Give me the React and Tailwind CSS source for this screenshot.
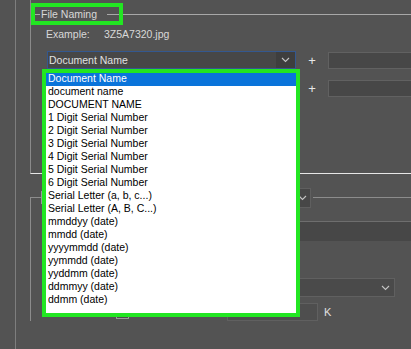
import React from "react";

const items = [
  "Document Name",
  "document name",
  "DOCUMENT NAME",
  "1 Digit Serial Number",
  "2 Digit Serial Number",
  "3 Digit Serial Number",
  "4 Digit Serial Number",
  "5 Digit Serial Number",
  "6 Digit Serial Number",
  "Serial Letter (a, b, c...)",
  "Serial Letter (A, B, C...)",
  "mmddyy (date)",
  "mmdd (date)",
  "yyyymmdd (date)",
  "yymmdd (date)",
  "yyddmm (date)",
  "ddmmyy (date)",
  "ddmm (date)",
];

function Chevron({ className = "" }) {
  return (
    <svg width="9" height="6" viewBox="0 0 9 6" className={className}>
      <polyline points="1,1 4.5,4.5 8,1" fill="none" stroke="#c4c4c4" strokeWidth="1.1" />
    </svg>
  );
}

export default function App() {
  return (
    <div className="relative w-[411px] h-[349px] overflow-hidden bg-[#535353] font-['Liberation_Sans',Arial,sans-serif] text-[10.5px] text-[#d8d8d8]">
      <div className="ml-[15px] h-full border-l border-[#7e7e7e] pl-[14px]">
        {/* Group 1: File Naming */}
        <div className="h-[174px] w-[420px] border-l border-b border-l-[#8a8a8a] border-b-[#e6e6e6]">
          <div className="flex h-[29px] items-center">
            <div className="h-px w-[9px] bg-[#a8a8a8]" />
            <span className="pl-[1px] pr-[10px] leading-none">File Naming</span>
            <div className="h-px flex-1 bg-[#a8a8a8]" />
          </div>
          <div className="flex h-[11px] items-center pl-[15px] leading-none">
            <span className="w-[58px]">Example:</span>
            <span>3Z5A7320.jpg</span>
          </div>
          <div className="mt-[11px] flex h-[18px] items-center pl-[16px]">
            <div className="flex h-[18px] w-[249px] items-stretch border border-[#34588f] bg-[#474747]">
              <span className="flex-1 pl-[1px] leading-[16px] text-[#e0e0e0]">Document Name</span>
              <span className="flex w-[19px] items-center justify-center bg-[#3e3e3e]">
                <Chevron />
              </span>
            </div>
            <span className="w-[32px] text-center text-[13px] leading-none text-[#e8e8e8]">+</span>
            <div className="h-[17px] flex-1 border border-[#616161] bg-[#474747]" />
          </div>
          <div className="mt-[11px] flex h-[17px] items-center pl-[16px]">
            <div className="flex h-[17px] w-[249px] items-stretch border border-[#616161] bg-[#474747]">
              <span className="flex-1" />
              <span className="flex w-[19px] items-center justify-center">
                <Chevron />
              </span>
            </div>
            <span className="w-[32px] text-center text-[13px] leading-none text-[#e8e8e8]">+</span>
            <div className="h-[17px] flex-1 border border-[#616161] bg-[#474747]" />
          </div>
        </div>

        {/* Group 2 */}
        <fieldset className="mt-[13px] w-[420px] border-l border-t border-[#8c8c8c]">
          <legend className="ml-[10px] flex h-[21px] w-[272px] items-center pr-[2px]">
            <span className="h-[13px] w-[13px] border border-[#9a9a9a] bg-[#474747]" />
            <span className="flex-1" />
            <div className="flex h-[20px] w-[60px] items-stretch border border-[#5f5f5f] bg-[#474747]">
              <span className="flex-1" />
              <span className="flex w-[15px] items-center justify-center">
                <Chevron />
              </span>
            </div>
          </legend>
          <div className="ml-[30px] mt-[13px] h-[20px] border-t border-[#6e6e6e] bg-[#474747]" />
          <div className="ml-[169px] mt-[37px] flex h-[19px] w-[195px] items-center justify-end border border-[#606060] bg-[#4a4a4a] pr-[4px]">
            <Chevron />
          </div>
          <div className="mt-[6px] flex h-[18px] items-center">
            <span className="ml-[85px] h-[13px] w-[13px] border border-[#9a9a9a] bg-[#4d4d4d]" />
            <div className="ml-[98px] h-[18px] w-[91px] border border-[#606060] bg-[#4e4e4e]" />
            <span className="ml-[6px] text-[11px] leading-none text-[#e0e0e0]">K</span>
          </div>
        </fieldset>
      </div>

      {/* Annotation: green box around group title */}
      <div className="absolute left-[31px] top-[3px] h-[22px] w-[92px] border-4 border-[#22e622]" />

      {/* Open dropdown list with green annotation border */}
      <div className="absolute left-[42px] top-[69px] h-[248px] w-[258px] border-4 border-[#22e622] bg-white">
        {items.map((t, i) => (
          <div
            key={t}
            className={
              i === 0
                ? "h-[13px] bg-[#0a74da] pl-[2px] leading-[11px] text-white"
                : "h-[13px] pl-[2px] leading-[11px] text-black"
            }
          >
            {t}
          </div>
        ))}
      </div>
    </div>
  );
}
